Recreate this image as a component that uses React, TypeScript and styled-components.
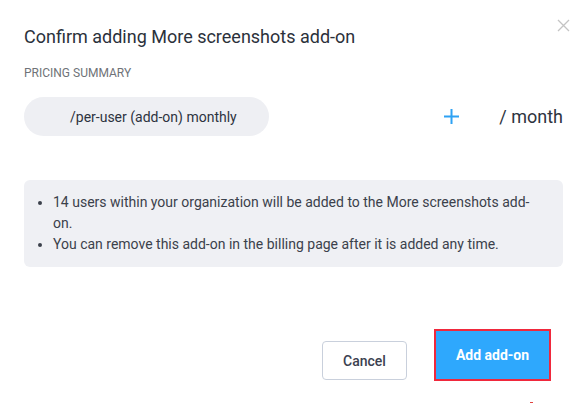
import styled, { createGlobalStyle } from 'styled-components';

const GlobalStyle = createGlobalStyle`
  html, body {
    margin: 0;
    padding: 0;
    background: #ffffff;
  }
  body {
    font-family: Roboto, 'Liberation Sans', sans-serif;
    color: #2d3340;
  }
`;

const Dialog = styled.div`
  position: relative;
  width: 587px;
  height: 405px;
  box-sizing: border-box;
  padding: 25px 24px 0 24px;
  display: flex;
  flex-direction: column;
  overflow: hidden;
`;

const Title = styled.h2`
  margin: 0;
  font-size: 18px;
  line-height: 24px;
  font-weight: 400;
  color: #2b313b;
`;

const CloseButton = styled.button`
  position: absolute;
  top: 17px;
  right: 16px;
  width: 16px;
  height: 16px;
  padding: 0;
  border: none;
  background: transparent;
  cursor: pointer;
  display: flex;
  align-items: center;
  justify-content: center;
`;

const SectionLabel = styled.div`
  margin-top: 16px;
  font-size: 12px;
  line-height: 16px;
  color: #6f7378;
  text-transform: uppercase;
`;

const PriceRow = styled.div`
  margin-top: 16px;
  display: flex;
  align-items: center;
  justify-content: space-between;
`;

const Pill = styled.div`
  width: 245px;
  height: 39px;
  box-sizing: border-box;
  padding-left: 46px;
  border-radius: 20px;
  background: #eeeff3;
  display: flex;
  align-items: center;
  font-size: 14px;
  color: #2d3340;
`;

const Total = styled.div`
  display: flex;
  align-items: center;
  gap: 40px;
`;

const PerMonth = styled.span`
  font-size: 18px;
  color: #2d3340;
`;

const InfoBox = styled.div`
  margin-top: 44px;
  background: #eff0f4;
  border-radius: 6px;
  padding: 12px 20px 12px 0;
`;

const InfoList = styled.ul`
  margin: 0;
  padding-left: 29px;
  font-size: 14px;
  line-height: 21px;
  color: #3b414b;

  li {
    padding-left: 0;
  }
`;

const Footer = styled.div`
  margin-top: auto;
  margin-bottom: 24px;
  padding-right: 12px;
  display: flex;
  justify-content: flex-end;
  align-items: flex-end;
  gap: 27px;
`;

const Button = styled.button<{ $primary?: boolean }>`
  box-sizing: border-box;
  font-family: Roboto, 'Liberation Sans', sans-serif;
  font-size: 14px;
  cursor: pointer;
  border-radius: ${(p) => (p.$primary ? '0' : '4px')};
  height: ${(p) => (p.$primary ? '52px' : '39px')};
  width: ${(p) => (p.$primary ? '117px' : '85px')};
  margin-bottom: ${(p) => (p.$primary ? '0' : '1px')};
  font-weight: ${(p) => (p.$primary ? 700 : 500)};
  color: ${(p) => (p.$primary ? '#ffffff' : '#3b4150')};
  background: ${(p) => (p.$primary ? '#2ea8fd' : '#ffffff')};
  border: ${(p) => (p.$primary ? '2px solid #f0283c' : '1px solid #c9d0dc')};
`;

const Tick = styled.span`
  position: absolute;
  left: 530px;
  top: 402px;
  width: 3px;
  height: 1px;
  background: #e2423f;
`;

export default function App() {
  return (
    <>
      <GlobalStyle />
      <Dialog>
        <CloseButton aria-label="Close">
          <svg width="13" height="13" viewBox="0 0 13 13">
            <path d="M1 1 L12 12 M12 1 L1 12" stroke="#c4c4c4" strokeWidth="1.3" />
          </svg>
        </CloseButton>

        <Title>Confirm adding More screenshots add-on</Title>
        <SectionLabel>Pricing summary</SectionLabel>

        <PriceRow>
          <Pill>/per-user (add-on) monthly</Pill>
          <Total>
            <svg width="15" height="15" viewBox="0 0 15 15">
              <path d="M7.5 0 V15 M0 7.5 H15" stroke="#2ea2f4" strokeWidth="2" />
            </svg>
            <PerMonth>/ month</PerMonth>
          </Total>
        </PriceRow>

        <InfoBox>
          <InfoList>
            <li>14 users within your organization will be added to the More screenshots add-on.</li>
            <li>You can remove this add-on in the billing page after it is added any time.</li>
          </InfoList>
        </InfoBox>

        <Footer>
          <Button>Cancel</Button>
          <Button $primary>Add add-on</Button>
        </Footer>
        <Tick />
      </Dialog>
    </>
  );
}
